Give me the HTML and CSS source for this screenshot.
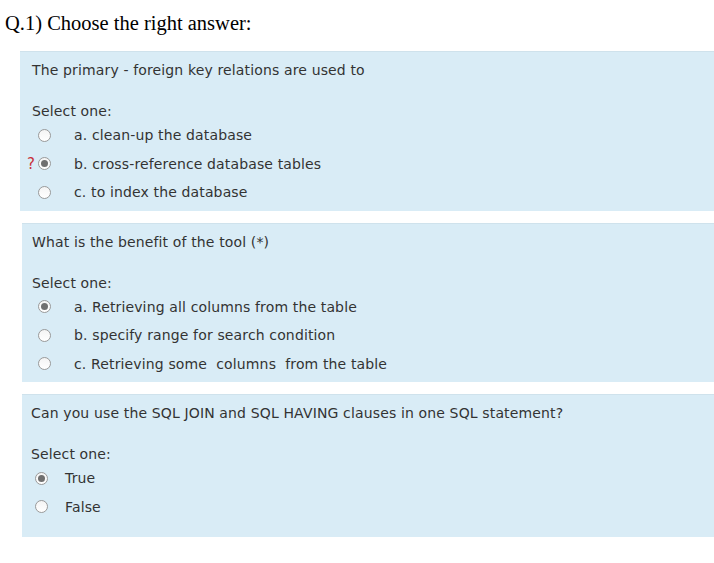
FILE: index.html
```html
<!DOCTYPE html>
<html lang="en">
<head>
<meta charset="UTF-8" />
<title>Q.1) Choose the right answer</title>
<link rel="stylesheet" href="styles.css">
</head>
<body>
  <h1 class="page-title">Q.1) Choose the right answer:</h1>

  <div class="question first">
    <div class="qtext">The primary - foreign key relations are used to</div>
    <div class="prompt">Select one:</div>
    <div class="answer">
      <div class="option">
        <span class="radio"></span>
        <span class="label">a. clean-up the database</span>
      </div>
      <div class="option">
        <span class="flag">?</span>
        <span class="radio checked"></span>
        <span class="label">b. cross-reference database tables</span>
      </div>
      <div class="option">
        <span class="radio"></span>
        <span class="label">c. to index the database</span>
      </div>
    </div>
  </div>

  <div class="question">
    <div class="qtext">What is the benefit of the tool (*)</div>
    <div class="prompt">Select one:</div>
    <div class="answer">
      <div class="option">
        <span class="radio checked"></span>
        <span class="label">a. Retrieving all columns from the table</span>
      </div>
      <div class="option">
        <span class="radio"></span>
        <span class="label">b. specify range for search condition</span>
      </div>
      <div class="option">
        <span class="radio"></span>
        <span class="label">c. Retrieving some&nbsp; columns&nbsp; from the table</span>
      </div>
    </div>
  </div>

  <div class="question truefalse">
    <div class="qtext">Can you use the SQL JOIN and SQL HAVING clauses in one SQL statement?</div>
    <div class="prompt">Select one:</div>
    <div class="answer">
      <div class="option">
        <span class="radio checked"></span>
        <span class="label">True</span>
      </div>
      <div class="option">
        <span class="radio"></span>
        <span class="label">False</span>
      </div>
    </div>
  </div>
</body>
</html>
```

FILE: styles.css
```css
/* Basic reset */
* {
  box-sizing: border-box;
}
html, body {
  margin: 0;
  padding: 0;
  background: #fff;
}

/* Page heading */
.page-title {
  margin: 0 0 15px;
  padding: 10px 0 0 5px;
  font-family: "Liberation Serif", "Times New Roman", serif;
  font-weight: normal;
  font-size: 20.5px;
  line-height: 26px;
  color: #000;
}

/* Question card */
.question {
  margin: 0 0 12px 22px;
  padding: 8px 12px 4px 10px;
  background: #d9ecf6;
  border-top: 1px solid #cfe2ec;
  font-family: "DejaVu Sans", Verdana, sans-serif;
  font-size: 14px;
  letter-spacing: 0.14px;
  color: #333;
}
.question.first {
  margin-left: 20px;
  padding-left: 12px;
}
.question.truefalse {
  padding-left: 9px;
  padding-bottom: 16px;
}

.qtext {
  line-height: 20px;
}
.prompt {
  margin-top: 21px;
  line-height: 20px;
}

/* Answer rows */
.option {
  position: relative;
  display: flex;
  align-items: center;
  height: 28.5px;
}
.radio {
  flex-shrink: 0;
  width: 13px;
  height: 13px;
  margin-left: 5.5px;
  margin-right: 23.5px;
  border: 1px solid #9a9a9a;
  border-radius: 50%;
  background: linear-gradient(#f4f4f4, #fff);
  position: relative;
}
.radio.checked::after {
  content: '';
  position: absolute;
  top: 2px;
  left: 2px;
  width: 7px;
  height: 7px;
  border-radius: 50%;
  background: #6f6f6f;
}
.truefalse .radio {
  margin-left: 3.5px;
  margin-right: 17.5px;
}
.label {
  white-space: nowrap;
}

/* Incorrect marker */
.flag {
  position: absolute;
  left: -5px;
  top: 50%;
  transform: translateY(-50%);
  color: #c9303a;
  font-size: 15px;
  line-height: 1;
}
```
